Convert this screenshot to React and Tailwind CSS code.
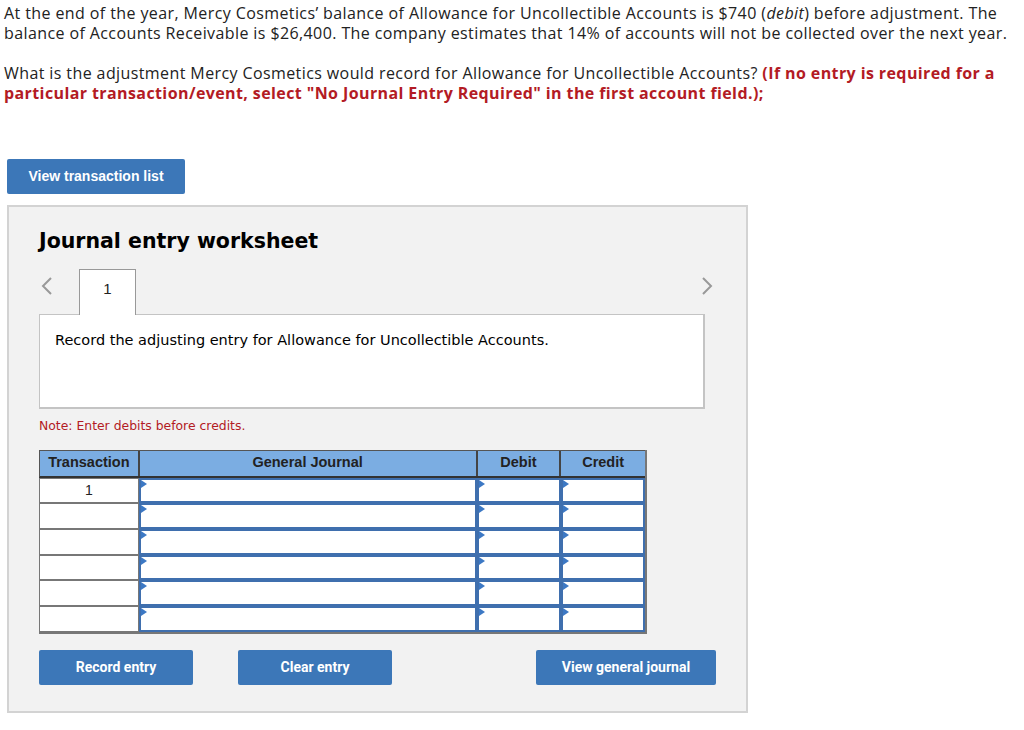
import React from 'react'

const sans = { fontFamily: '"Open Sans", Lato, sans-serif' }

function Arrow() {
  return <span className="absolute left-0 top-0 w-0 h-0 border-t-[4px] border-b-[4px] border-l-[6px] border-t-transparent border-b-transparent border-l-[#3c78c4]"></span>
}

function InputCell({ w }) {
  return (
    <div className={`relative ${w} h-full bg-white border-2 border-[#3f6fae]`}>
      <Arrow />
    </div>
  )
}

function Row({ num }) {
  return (
    <div className="flex h-[25.7px]">
      <div className="w-[100px] h-full bg-white border border-[#777] flex items-center justify-center text-[14px] text-[#222] font-['Liberation_Sans',sans-serif]">
        {num}
      </div>
      <InputCell w="w-[339px]" />
      <InputCell w="w-[84px]" />
      <InputCell w="w-[84px]" />
    </div>
  )
}

function BlueButton({ children, className, font = "font-['Roboto',sans-serif]" }) {
  return (
    <button className={`h-[35px] shrink-0 bg-[#3c77b8] rounded-[2px] text-white font-bold ${font} ${className}`}>
      {children}
    </button>
  )
}

export default function App() {
  const rows = ['1', '', '', '', '', '']
  return (
    <div className="w-[1024px] h-[730px] bg-white text-[#222]">
      <div className="px-[4px] pt-[3px] text-[16px] leading-[20px] tracking-[0.4px] text-[#222]" style={sans}>
        <p>
          At the end of the year, Mercy Cosmetics’ balance of Allowance for Uncollectible Accounts is $740 (<i>debit</i>) before adjustment. The balance of Accounts Receivable is $26,400. The company estimates that 14% of accounts will not be collected over the next year.
        </p>
        <p className="mt-[20px]">
          What is the adjustment Mercy Cosmetics would record for Allowance for Uncollectible Accounts?{' '}
          <b className="text-[#b31b24]">(If no entry is required for a particular transaction/event, select "No Journal Entry Required" in the first account field.);</b>
        </p>
      </div>

      <div className="pl-[7px] mt-[56px]">
        <BlueButton className="w-[178px] text-[14px]" font="font-['Liberation_Sans',sans-serif]">View transaction list</BlueButton>
      </div>

      <div className="ml-[7px] mt-[11px] w-[741px] h-[508px] bg-[#f2f2f2] border-2 border-[#d3d3d3] pl-[30px] pr-[30px]">
        <h2 className="mt-[20px] text-[20.5px] leading-[28px] font-bold text-black font-['DejaVu_Sans',sans-serif]">
          Journal entry worksheet
        </h2>

        <div className="mt-[14px] flex items-end h-[45px] relative">
          <svg className="absolute left-[2px] top-[8px]" width="12" height="18" viewBox="0 0 12 18">
            <path d="M10 1 L2 9 L10 17" fill="none" stroke="#999" strokeWidth="2" />
          </svg>
          <svg className="absolute right-[3px] top-[8px]" width="12" height="18" viewBox="0 0 12 18">
            <path d="M2 1 L10 9 L2 17" fill="none" stroke="#999" strokeWidth="2" />
          </svg>
          <div className="ml-[40px] w-[57px] h-[46px] bg-white border border-[#999] border-b-0 flex justify-center pt-[8px] text-[15px] font-['Liberation_Sans',sans-serif] relative top-[1px] z-10">
            1
          </div>
        </div>
        <div className="w-[666px] h-[95px] bg-white border border-[#c4c4c4] border-b-2 border-r-2 px-[15px] pt-[15px] text-[14.5px] font-['DejaVu_Sans',sans-serif] text-black">
          Record the adjusting entry for Allowance for Uncollectible Accounts.
        </div>
        <div className="mt-[8px] text-[12.4px] text-[#b31b24] font-['DejaVu_Sans',sans-serif]">
          Note: Enter debits before credits.
        </div>

        <div className="mt-[14px] w-[608px] border-r-2 border-b-2 border-[#777]">
          <div className="flex h-[28px] bg-[#7badE2] border-t border-l border-[#555] border-b-2 border-b-[#333] text-[14.5px] font-bold text-[#222] font-['Liberation_Sans',sans-serif]">
            <div className="w-[100px] flex items-center justify-center border-r-2 border-[#444]">Transaction</div>
            <div className="w-[339px] flex items-center justify-center border-r-2 border-[#444]">General Journal</div>
            <div className="w-[84px] flex items-center justify-center border-r-2 border-[#444]">Debit</div>
            <div className="w-[84px] flex items-center justify-center">Credit</div>
          </div>
          {rows.map((r, i) => <Row key={i} num={r} />)}
        </div>

        <div className="mt-[16px] flex">
          <BlueButton className="w-[154px] text-[14px]">Record entry</BlueButton>
          <BlueButton className="w-[154px] ml-[45px] text-[14px]">Clear entry</BlueButton>
          <BlueButton className="w-[180px] ml-[144px] text-[14px]">View general journal</BlueButton>
        </div>
      </div>
    </div>
  )
}
